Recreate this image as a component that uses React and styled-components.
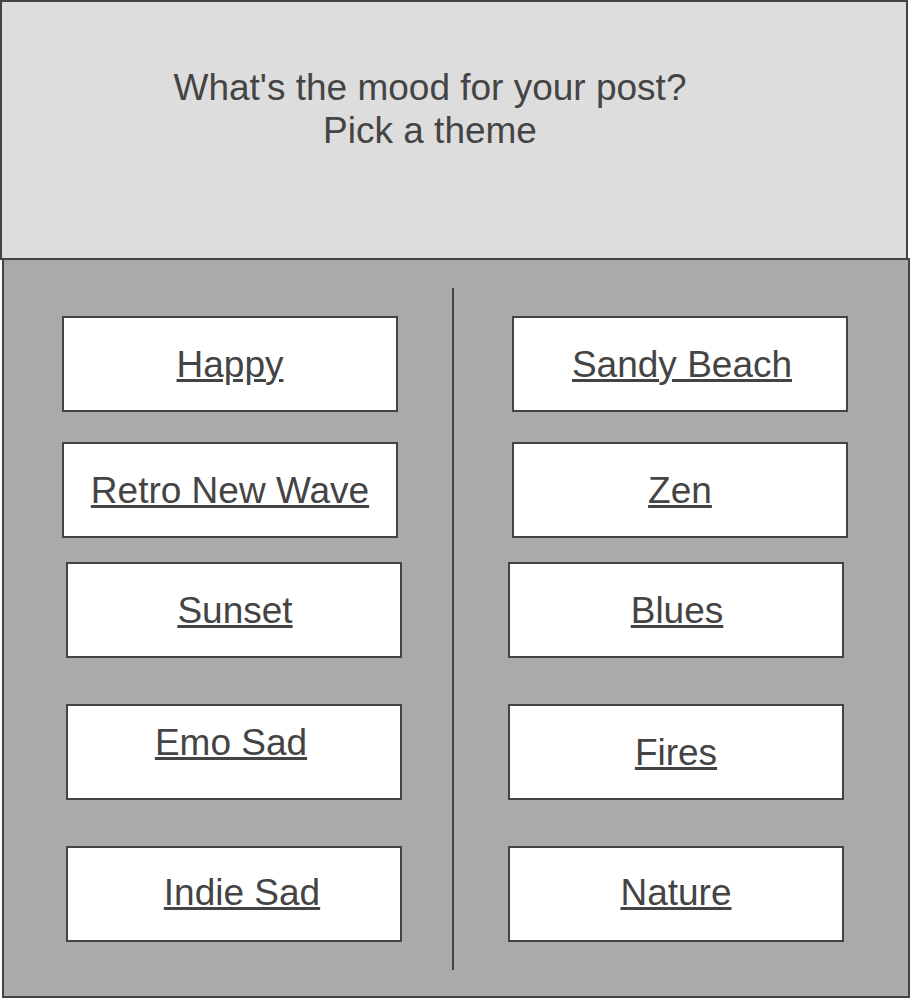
import React from 'react'
import styled, { createGlobalStyle } from 'styled-components'

const GlobalStyle = createGlobalStyle`
   html, body {
      margin: 0;
      padding: 0;
      background: #ffffff;
   }
   body {
      font-family: "Liberation Sans", Arial, sans-serif;
      color: #444444;
   }
`

const Page = styled.div`
   width: 912px;
   height: 1002px;
`

const Header = styled.header`
   box-sizing: border-box;
   width: 908px;
   height: 260px;
   background-color: #dddddd;
   border: 2px solid #444444;
   padding: 64px 48px 0 0;
   text-align: center;
   font-size: 37px;
   line-height: 43px;
   color: #444444;
`

const Board = styled.main`
   box-sizing: border-box;
   display: flex;
   width: 908px;
   height: 740px;
   margin: -2px 0 0 2px;
   background-color: #aaaaaa;
   border: 2px solid #444444;
`

const Column = styled.div`
   display: flex;
   flex-direction: column;
   width: ${p => p.$width}px;
   padding-top: 56px;
`

const Divider = styled.div`
   width: 2px;
   height: 682px;
   margin-top: 28px;
   background-color: #444444;
`

const ThemeButton = styled.a`
   box-sizing: border-box;
   display: flex;
   align-items: center;
   justify-content: center;
   width: 336px;
   height: 96px;
   margin-left: ${p => 58 + p.$shift}px;
   margin-top: ${p => p.$gap}px;
   background-color: #ffffff;
   border: 2px solid #444444;
   cursor: pointer;
`

const Label = styled.span`
   font-size: 37px;
   line-height: 43px;
   color: #444444;
   text-decoration: underline;
   margin-left: ${p => (p.$dx || 0) * 2}px;
   margin-top: ${p => (p.$dy || 0) * 2}px;
`

const gaps = [0, 30, 24, 46, 46]

const leftThemes = [
   { name: 'Happy', shift: 0 },
   { name: 'Retro New Wave', shift: 0 },
   { name: 'Sunset', shift: 4, dx: 1 },
   { name: 'Emo Sad', shift: 4, dx: -3, dy: -10 },
   { name: 'Indie Sad', shift: 4, dx: 8, dy: -2 },
]

const rightThemes = [
   { name: 'Sandy Beach', shift: 0, dx: 2 },
   { name: 'Zen', shift: 0 },
   { name: 'Blues', shift: -4, dx: 1 },
   { name: 'Fires', shift: -4 },
   { name: 'Nature', shift: -4, dy: -2 },
]

const ThemeList = ({ themes, width }) => (
   <Column $width={width}>
      {themes.map((t, i) => (
         <ThemeButton key={t.name} $shift={t.shift} $gap={gaps[i]}>
            <Label $dx={t.dx} $dy={t.dy}>{t.name}</Label>
         </ThemeButton>
      ))}
   </Column>
)

const App = () => {
   return (
      <>
         <GlobalStyle />
         <Page>
            <Header>
               What's the mood for your post?
               <br />
               Pick a theme
            </Header>
            <Board>
               <ThemeList themes={leftThemes} width={448} />
               <Divider />
               <ThemeList themes={rightThemes} width={454} />
            </Board>
         </Page>
      </>
   )
}

export default App
